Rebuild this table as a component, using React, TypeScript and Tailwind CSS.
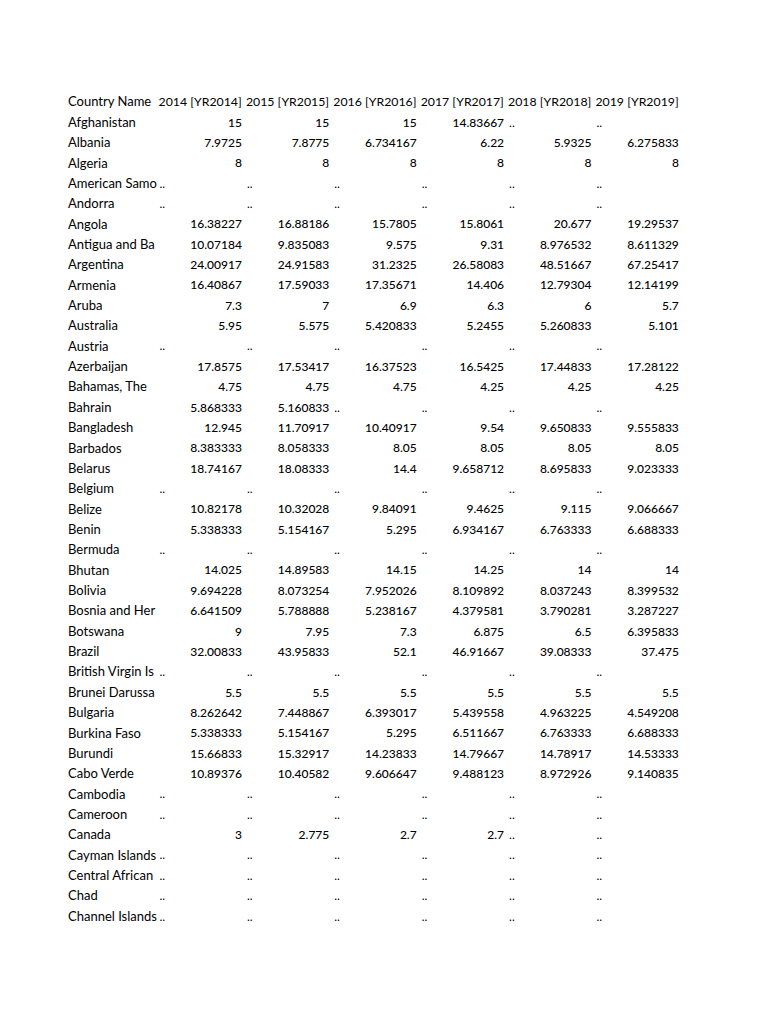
import React from "react"

type Cell = string

const header: Cell[] = [
  "Country Name",
  "2014 [YR2014]",
  "2015 [YR2015]",
  "2016 [YR2016]",
  "2017 [YR2017]",
  "2018 [YR2018]",
  "2019 [YR2019]",
]

const D = ".."
const empty = [D, D, D, D, D, D]

const rows: [string, Cell[]][] = [
  ["Afghanistan", ["15", "15", "15", "14.83667", D, D]],
  ["Albania", ["7.9725", "7.8775", "6.734167", "6.22", "5.9325", "6.275833"]],
  ["Algeria", ["8", "8", "8", "8", "8", "8"]],
  ["American Samo", empty],
  ["Andorra", empty],
  ["Angola", ["16.38227", "16.88186", "15.7805", "15.8061", "20.677", "19.29537"]],
  ["Antigua and Ba", ["10.07184", "9.835083", "9.575", "9.31", "8.976532", "8.611329"]],
  ["Argentina", ["24.00917", "24.91583", "31.2325", "26.58083", "48.51667", "67.25417"]],
  ["Armenia", ["16.40867", "17.59033", "17.35671", "14.406", "12.79304", "12.14199"]],
  ["Aruba", ["7.3", "7", "6.9", "6.3", "6", "5.7"]],
  ["Australia", ["5.95", "5.575", "5.420833", "5.2455", "5.260833", "5.101"]],
  ["Austria", empty],
  ["Azerbaijan", ["17.8575", "17.53417", "16.37523", "16.5425", "17.44833", "17.28122"]],
  ["Bahamas, The", ["4.75", "4.75", "4.75", "4.25", "4.25", "4.25"]],
  ["Bahrain", ["5.868333", "5.160833", D, D, D, D]],
  ["Bangladesh", ["12.945", "11.70917", "10.40917", "9.54", "9.650833", "9.555833"]],
  ["Barbados", ["8.383333", "8.058333", "8.05", "8.05", "8.05", "8.05"]],
  ["Belarus", ["18.74167", "18.08333", "14.4", "9.658712", "8.695833", "9.023333"]],
  ["Belgium", empty],
  ["Belize", ["10.82178", "10.32028", "9.84091", "9.4625", "9.115", "9.066667"]],
  ["Benin", ["5.338333", "5.154167", "5.295", "6.934167", "6.763333", "6.688333"]],
  ["Bermuda", empty],
  ["Bhutan", ["14.025", "14.89583", "14.15", "14.25", "14", "14"]],
  ["Bolivia", ["9.694228", "8.073254", "7.952026", "8.109892", "8.037243", "8.399532"]],
  ["Bosnia and Her", ["6.641509", "5.788888", "5.238167", "4.379581", "3.790281", "3.287227"]],
  ["Botswana", ["9", "7.95", "7.3", "6.875", "6.5", "6.395833"]],
  ["Brazil", ["32.00833", "43.95833", "52.1", "46.91667", "39.08333", "37.475"]],
  ["British Virgin Is", empty],
  ["Brunei Darussa", ["5.5", "5.5", "5.5", "5.5", "5.5", "5.5"]],
  ["Bulgaria", ["8.262642", "7.448867", "6.393017", "5.439558", "4.963225", "4.549208"]],
  ["Burkina Faso", ["5.338333", "5.154167", "5.295", "6.511667", "6.763333", "6.688333"]],
  ["Burundi", ["15.66833", "15.32917", "14.23833", "14.79667", "14.78917", "14.53333"]],
  ["Cabo Verde", ["10.89376", "10.40582", "9.606647", "9.488123", "8.972926", "9.140835"]],
  ["Cambodia", empty],
  ["Cameroon", empty],
  ["Canada", ["3", "2.775", "2.7", "2.7", D, D]],
  ["Cayman Islands", empty],
  ["Central African", empty],
  ["Chad", empty],
  ["Channel Islands", empty],
]

const cellBase = "h-[20.36px] flex items-center px-[2px] whitespace-nowrap overflow-hidden"

export default function App() {
  return (
    <div className="min-h-[1024px] w-[768px] bg-white pt-[92px] pl-[66px] text-[12px] text-black font-['Lato',sans-serif]">
      <div className="grid grid-cols-[90.5px_repeat(6,87.4px)]">
        {header.map((h, i) => (
          <div key={"h" + i} className={cellBase + (i === 0 ? " text-[13px]" : " text-[12.3px]")}>
            {h}
          </div>
        ))}
        {rows.map(([name, vals]) => (
          <React.Fragment key={name}>
            <div className={cellBase + " text-[13px]"}>{name}</div>
            {vals.map((v, j) => (
              <div
                key={name + j}
                className={cellBase + (v === D ? " justify-start pl-[3px]" : " justify-end font-medium")}
              >
                {v}
              </div>
            ))}
          </React.Fragment>
        ))}
      </div>
    </div>
  )
}
